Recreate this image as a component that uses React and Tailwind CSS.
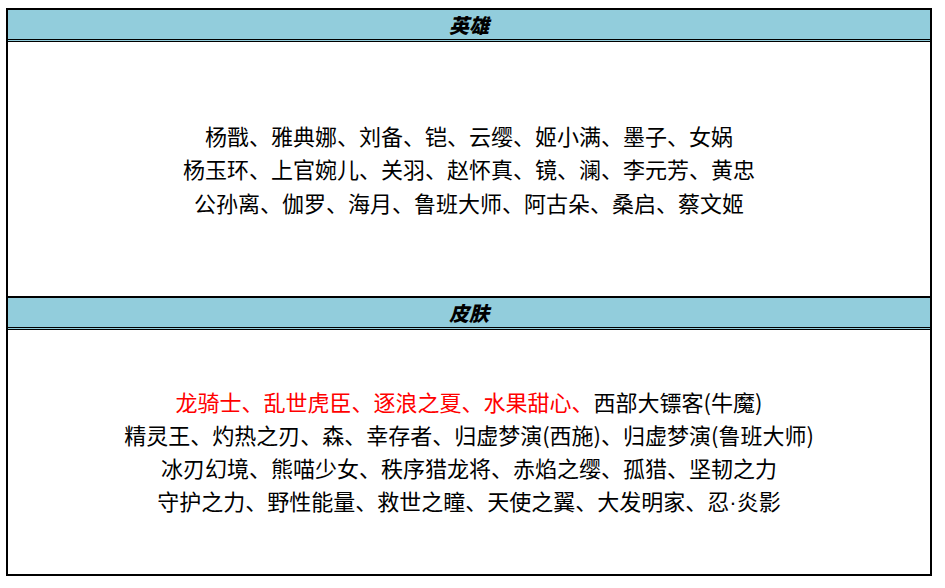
import React from 'react';

const heroes = [
    '杨戬、雅典娜、刘备、铠、云缨、姬小满、墨子、女娲',
    '杨玉环、上官婉儿、关羽、赵怀真、镜、澜、李元芳、黄忠',
    '公孙离、伽罗、海月、鲁班大师、阿古朵、桑启、蔡文姬',
];

const skins = [
    '精灵王、灼热之刃、森、幸存者、归虚梦演(西施)、归虚梦演(鲁班大师)',
    '冰刃幻境、熊喵少女、秩序猎龙将、赤焰之缨、孤猎、坚韧之力',
];

const font = { fontFamily: '"Noto Sans CJK SC", "Microsoft YaHei", sans-serif' };

const Header = ({ title }) => (
    <div className="h-[32px] bg-[#92cddc] border-b-[3px] border-double border-black flex items-center justify-center">
        <span className="text-[20px] font-black italic text-black leading-none">{title}</span>
    </div>
);

export default function App() {
    return (
        <div className="w-[945px] h-[588px] bg-white pt-[8px] pl-[6px]" style={font}>
            <div className="w-[926px] h-[568px] border-2 border-black flex flex-col">
                <Header title="英雄" />
                <div className="h-[254px] flex flex-col items-center justify-center text-[22px] leading-[33.5px] text-black">
                    {heroes.map((line) => (
                        <p key={line}>{line}</p>
                    ))}
                </div>
                <div className="border-t-2 border-black">
                    <Header title="皮肤" />
                </div>
                <div className="flex-1 flex flex-col items-center justify-center text-[22px] leading-[33px] text-black">
                    <p>
                        <span className="text-[#ff0000]">龙骑士、乱世虎臣、逐浪之夏、水果甜心、</span>
                        西部大镖客(牛魔)
                    </p>
                    {skins.map((line) => (
                        <p key={line}>{line}</p>
                    ))}
                    <p>
                        守护之力、野性能量、救世之瞳、天使之翼、大发明家、忍
                        <span className="font-['Liberation_Sans']">·</span>
                        炎影
                    </p>
                </div>
            </div>
        </div>
    );
}
